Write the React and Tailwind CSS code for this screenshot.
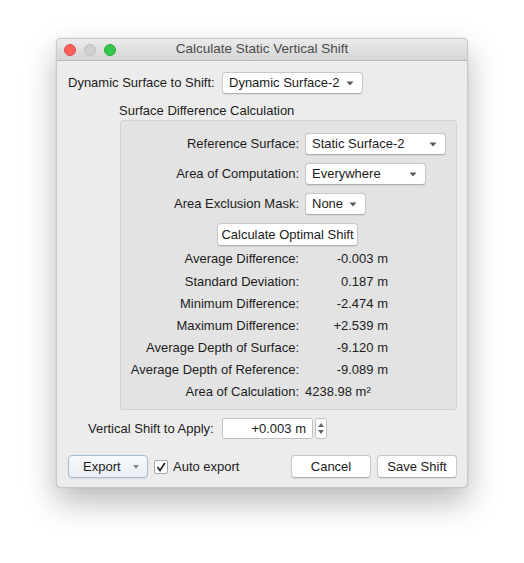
import React from "react";

function Arrow() {
  return (
    <svg width="8" height="5" viewBox="0 0 8 5" className="shrink-0">
      <path d="M0.5 0.5 L7.5 0.5 L4 4.5 Z" fill="#5a5a5a" />
    </svg>
  );
}

function Popup({ label, width }) {
  return (
    <div
      className={`h-[22px] ${width} flex items-center justify-between pl-[6px] pr-[8px] bg-white border border-[#c8c8c8] border-b-[#b0b0b0] rounded-[4px] shadow-[0_0.5px_1px_rgba(0,0,0,0.08)] text-[13px] text-[#1c1c1c]`}
    >
      <span>{label}</span>
      <Arrow />
    </div>
  );
}

function Button({ children, className = "" }) {
  return (
    <div
      className={`flex items-center justify-center bg-white border border-[#c8c8c8] border-b-[#b0b0b0] rounded-[4px] shadow-[0_0.5px_1px_rgba(0,0,0,0.08)] text-[13px] text-[#1c1c1c] ${className}`}
    >
      {children}
    </div>
  );
}

const stats = [
  ["Average Difference:", "-0.003 m"],
  ["Standard Deviation:", "0.187 m"],
  ["Minimum Difference:", "-2.474 m"],
  ["Maximum Difference:", "+2.539 m"],
  ["Average Depth of Surface:", "-9.120 m"],
  ["Average Depth of Reference:", "-9.089 m"],
];

export default function App() {
  return (
    <div className="min-h-[563px] bg-white pt-[38px] pl-[56px] font-['Liberation_Sans',Arial,sans-serif] text-[13px] text-[#1c1c1c]">
      <div className="w-[412px] h-[450px] flex flex-col bg-[#ececec] rounded-[5px] border border-[#c9c9c9] shadow-[0_14px_32px_rgba(0,0,0,0.28),0_0_1px_rgba(0,0,0,0.3)] overflow-hidden">
        {/* title bar */}
        <div className="h-[22px] shrink-0 grid grid-cols-[1fr_auto_1fr] items-center bg-gradient-to-b from-[#ebebeb] to-[#d5d5d5] border-b border-[#b9b9b9]">
          <div className="flex items-center gap-[8px] pl-[7px]">
            <span className="w-[12px] h-[12px] rounded-full bg-[#fc605c] border border-[#de4a46]" />
            <span className="w-[12px] h-[12px] rounded-full bg-[#d0d0d0] border border-[#bdbdbd]" />
            <span className="w-[12px] h-[12px] rounded-full bg-[#34c84a] border border-[#25a83a]" />
          </div>
          <div className="text-[13.5px] text-[#4a4a4a]">Calculate Static Vertical Shift</div>
          <div />
        </div>

        {/* body */}
        <div className="flex flex-col px-[10px]">
          <div className="flex items-center mt-[11px] pl-[1px]">
            <span className="w-[147px]">Dynamic Surface to Shift:</span>
            <span className="ml-[7px]">
              <Popup label="Dynamic Surface-2" width="w-[141px]" />
            </span>
          </div>

          <div className="ml-[52px] mt-[9px] leading-[16px]">Surface Difference Calculation</div>

          <div className="ml-[53px] mt-[1px] h-[290px] bg-[#e3e3e3] border border-[#d3d3d3] rounded-[3px] flex flex-col pt-[12px]">
            <div className="flex items-center">
              <span className="w-[178px] text-right">Reference Surface:</span>
              <span className="ml-[6px]"><Popup label="Static Surface-2" width="w-[141px]" /></span>
            </div>
            <div className="flex items-center mt-[8px]">
              <span className="w-[178px] text-right">Area of Computation:</span>
              <span className="ml-[6px]"><Popup label="Everywhere" width="w-[121px]" /></span>
            </div>
            <div className="flex items-center mt-[8px]">
              <span className="w-[178px] text-right">Area Exclusion Mask:</span>
              <span className="ml-[6px]"><Popup label="None" width="w-[61px]" /></span>
            </div>
            <div className="flex justify-center mt-[8px] pr-[2px]">
              <Button className="h-[23px] w-[141px]">Calculate Optimal Shift</Button>
            </div>
            <div className="flex flex-col mt-[2px]">
              {stats.map(([k, v]) => (
                <div key={k} className="flex items-center h-[22.2px]">
                  <span className="w-[178px] text-right">{k}</span>
                  <span className="ml-[6px] w-[83px] text-right">{v}</span>
                </div>
              ))}
              <div className="flex items-center h-[22.2px]">
                <span className="w-[178px] text-right">Area of Calculation:</span>
                <span className="ml-[6px]">4238.98 m²</span>
              </div>
            </div>
          </div>

          <div className="flex items-center mt-[8px] pl-[21px]">
            <span className="w-[127px]">Vertical Shift to Apply:</span>
            <div className="ml-[7px] h-[21px] w-[91px] flex items-center justify-end pr-[6px] bg-white border border-[#c2c2c2] rounded-[2px]">
              +0.003 m
            </div>
            <div className="ml-[2px] h-[21px] w-[12px] flex flex-col items-center justify-center gap-[3px] bg-white border border-[#c2c2c2] rounded-[3px]">
              <svg width="6" height="4" viewBox="0 0 6 4"><path d="M0 4 L6 4 L3 0 Z" fill="#666" /></svg>
              <svg width="6" height="4" viewBox="0 0 6 4"><path d="M0 0 L6 0 L3 4 Z" fill="#666" /></svg>
            </div>
          </div>

          <div className="flex items-center mt-[16px] pl-[1px]">
            <div className="h-[23px] w-[80px] flex items-center justify-between pl-[14px] pr-[8px] bg-gradient-to-b from-[#f6f9fc] to-[#e9eff5] border border-[#a9bccf] rounded-[4px] shadow-[0_0.5px_1px_rgba(0,0,0,0.08)]">
              <span>Export</span>
              <svg width="6" height="4" viewBox="0 0 6 4"><path d="M0 0 L6 0 L3 4 Z" fill="#888" /></svg>
            </div>
            <div className="ml-[6px] w-[14px] h-[14px] flex items-center justify-center bg-white border border-[#a8a8a8] rounded-[2px]">
              <svg width="10" height="10" viewBox="0 0 10 10">
                <path d="M1.5 5 L4 8.5 L8.8 1" fill="none" stroke="#222" strokeWidth="1.6" />
              </svg>
            </div>
            <span className="ml-[5px]">Auto export</span>
            <div className="flex-1" />
            <Button className="h-[23px] w-[80px]">Cancel</Button>
            <Button className="h-[23px] w-[80px] ml-[6px]">Save Shift</Button>
          </div>
        </div>
      </div>
    </div>
  );
}
